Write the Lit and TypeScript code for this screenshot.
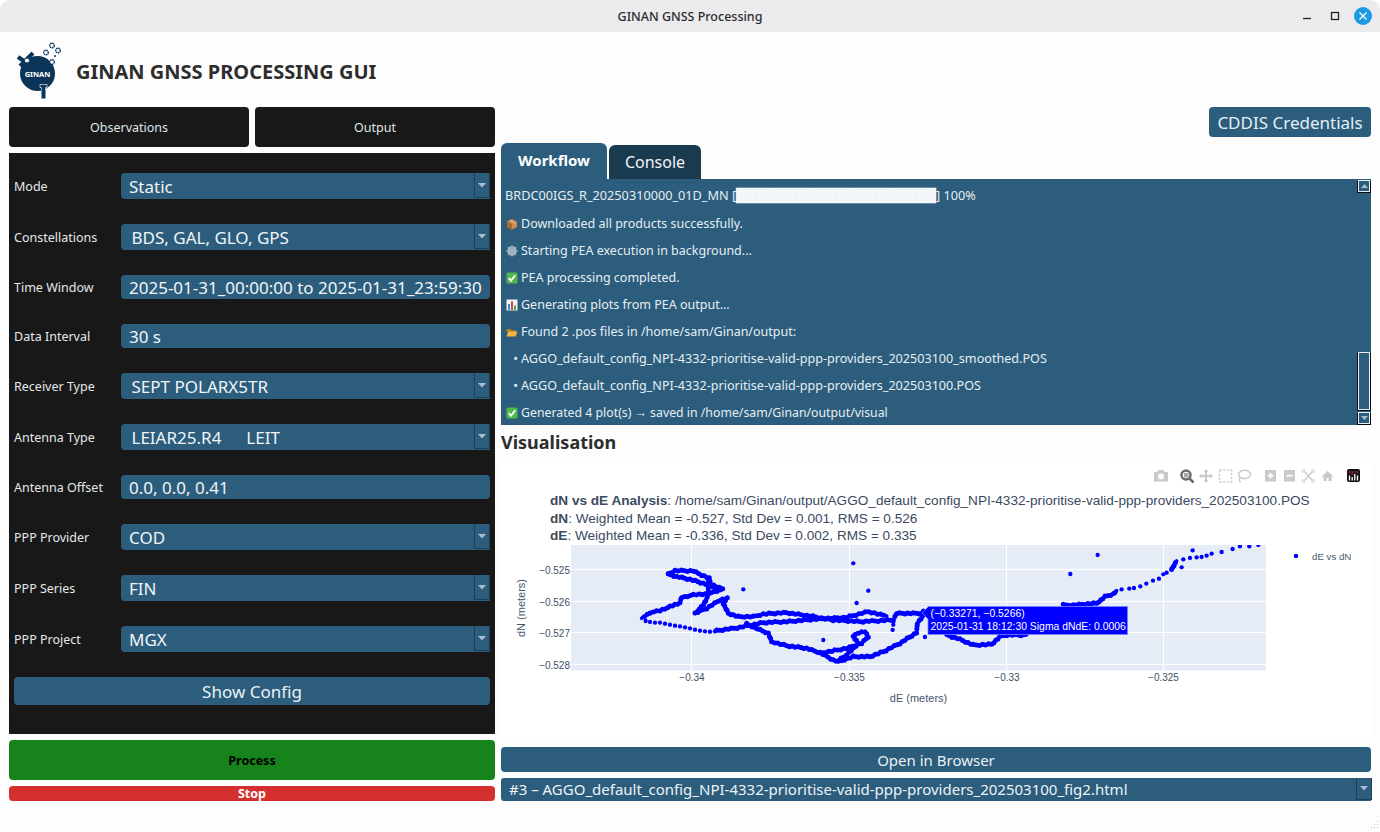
import { LitElement, html, css, svg } from "lit";
import { customElement } from "lit/decorators.js";

const FIELDS = [
  { label: "Mode", value: "Static", combo: true },
  { label: "Constellations", value: "BDS, GAL, GLO, GPS", combo: true, inset: true },
  { label: "Time Window", value: "2025-01-31_00:00:00 to 2025-01-31_23:59:30" },
  { label: "Data Interval", value: "30 s" },
  { label: "Receiver Type", value: "SEPT POLARX5TR", combo: true, inset: true },
  { label: "Antenna Type", value: "LEIAR25.R4\u00a0\u00a0\u00a0\u00a0\u00a0\u2009LEIT", combo: true, inset: true },
  { label: "Antenna Offset", value: "0.0, 0.0, 0.41" },
  { label: "PPP Provider", value: "COD", combo: true },
  { label: "PPP Series", value: "FIN", combo: true },
  { label: "PPP Project", value: "MGX", combo: true },
];

const ICONS: Record<string, unknown> = {
  box: svg`<path d="M1 3.5 6 1l5 2.5V9L6 11.5 1 9z" fill="#c98a4b"/><path d="M1 3.5 6 6v5.5L1 9z" fill="#a9692f"/><path d="M3.5 2.2 8.5 4.8v1.6" stroke="#e8c79a" fill="none"/>`,
  gear: svg`<circle cx="6" cy="6" r="3.6" fill="none" stroke="#9fb3c0" stroke-width="2.4"/><path d="M6 .5v11M.5 6h11M2.1 2.1l7.8 7.8M9.9 2.1l-7.8 7.8" stroke="#9fb3c0" stroke-width="1.5"/>`,
  check: svg`<rect x=".5" y=".5" width="11" height="11" rx="1.5" fill="#4fb84f"/><path d="M2.8 6.2 5 8.8l4.2-5.6" stroke="#fff" stroke-width="1.8" fill="none"/>`,
  chart: svg`<rect x=".5" y=".5" width="11" height="11" fill="#eef2f5"/><rect x="2" y="5" width="2" height="6" fill="#3f8fd0"/><rect x="5" y="2.5" width="2" height="8.5" fill="#d0483f"/><rect x="8" y="6.5" width="2" height="4.5" fill="#4fa84f"/>`,
  folder: svg`<path d="M.5 3h4l1 1.2H10V6H.5z" fill="#b77b22"/><path d="M.5 10.5 2.3 5.5h9.2l-1.800 5z" fill="#f2b544"/>`,
};

const LOG = [
  { icon: "box", text: "Downloaded all products successfully." },
  { icon: "gear", text: "Starting PEA execution in background..." },
  { icon: "check", text: "PEA processing completed." },
  { icon: "chart", text: "Generating plots from PEA output..." },
  { icon: "folder", text: "Found 2 .pos files in /home/sam/Ginan/output:" },
  { bullet: true, text: "AGGO_default_config_NPI-4332-prioritise-valid-ppp-providers_202503100_smoothed.POS" },
  { bullet: true, text: "AGGO_default_config_NPI-4332-prioritise-valid-ppp-providers_202503100.POS" },
  { icon: "check", text: "Generated 4 plot(s) \u2192 saved in /home/sam/Ginan/output/visual", tight: true },
];

// traced from the plot, in 3x crop coordinates
const LINES_A = [
  "505,283 525,272 545,272 580,273 605,285 628,295 632,312 668,328",
  "505,283 530,290 570,298 610,310 640,320 668,328",
  "668,328 625,340 580,345 545,352 540,368 510,380 480,392 450,398 425,415",
  "625,300 625,345 610,375 585,400 620,385 660,360 682,355 670,370 685,400 715,410 760,410 790,402 860,398 930,408 1000,420 1080,425 1180,420 1190,400 1240,400 1275,400",
  "650,452 720,442 790,428 860,425 940,418 1040,412 1105,395 1160,408",
  "740,432 780,450 805,460 815,485 860,497 920,505 960,518 1000,540 1015,545 1060,530 1110,530 1150,515 1200,490 1250,458 1252,430 1275,400",
  "960,520 1040,505 1085,490 1105,470 1095,455 1065,462 1060,470 1075,490 1040,525 1015,540",
];
const DOTS_A = [
  [1060, 250], [730, 328], [1105, 332], [1070, 369], [970, 480], [1275, 471], [1178, 450], [1180, 434], [1270, 392],
  [437, 423], [450, 426], [465, 428], [480, 428], [495, 431], [510, 434], [525, 437], [540, 439], [555, 442], [570, 445],
  [585, 449], [600, 452], [615, 454], [630, 455], [645, 454],
];
const LINES_B = [
  "140,315 180,328 220,345 275,343 300,320 320,315 380,315",
  "490,225 520,225 590,220 615,200 640,192 650,182",
  "815,120 822,105 830,93",
];
const DOTS_B = [
  [593, 75], [511, 132], [878, 61], [845, 112], [850, 88], [870, 84], [890, 82], [905, 81], [920, 77], [935, 71], [965, 66],
  [998, 57], [1020, 49], [1048, 49], [1075, 45], [602, 212], [665, 178], [688, 176], [702, 174], [721, 169], [739, 161],
  [759, 152], [777, 146], [790, 133], [800, 128],
];

// the trace is thousands of overlapping markers, so walk each line and drop dots on it
function markers(line: string) {
  const pts = line.split(" ").map((p) => p.split(",").map(Number));
  const out: number[][] = [];
  for (let i = 1; i < pts.length; i++) {
    const [x0, y0] = pts[i - 1];
    const [x1, y1] = pts[i];
    const n = Math.max(1, Math.round(Math.hypot(x1 - x0, y1 - y0) / 9));
    for (let k = 0; k < n; k++) {
      const wob = ((out.length * 7) % 5) - 2;
      out.push([x0 + ((x1 - x0) * k) / n, y0 + ((y1 - y0) * k) / n + wob]);
    }
  }
  return out;
}

function trace(lines: string[], dots: number[][]) {
  return svg`${lines.map((p) => svg`<polyline points=${p} fill="none" stroke="#0000ff" stroke-width="11" stroke-linejoin="round" stroke-linecap="round"/>
      ${markers(p).map((d) => svg`<circle cx=${d[0]} cy=${d[1]} r="7.500" fill="#0000ff"/>`)}`)}
    ${dots.map((d) => svg`<circle cx=${d[0]} cy=${d[1]} r="6.500" fill="#0000ff"/>`)}`;
}

@customElement("app-root")
export class AppRoot extends LitElement {
  static styles = css`
    :host {
      display: block;
      width: 1380px;
      height: 832px;
      overflow: hidden;
      background: #fdfdfd;
      font-family: "Noto Sans", "Open Sans", sans-serif;
    }
    .titlebar {
      height: 32px;
      background: #ebebed;
      border-radius: 10px 10px 0 0;
      display: grid;
      grid-template-columns: 1fr auto 1fr;
      align-items: center;
      font-size: 12.5px;
      font-weight: 500;
      color: #2c2c2c;
    }
    .controls {
      grid-column: 3;
      display: flex;
      justify-content: flex-end;
      align-items: center;
      padding-right: 7px;
    }
    .header {
      height: 75px;
      padding-left: 9px;
      display: flex;
      align-items: center;
      gap: 7px;
    }
    .header h1 {
      margin: 3px 0 0;
      font-size: 20px;
      font-weight: 700;
      color: #2d2d2d;
    }
    .main {
      display: grid;
      grid-template-columns: 486px 870px;
      gap: 6px;
      padding-left: 9px;
    }
    .left,
    .right {
      display: flex;
      flex-direction: column;
      gap: 6px;
    }
    .top-buttons {
      display: grid;
      grid-template-columns: 240px 240px;
      gap: 6px;
    }
    .dark-btn {
      height: 40px;
      background: #181818;
      color: #dfe6ea;
      border-radius: 4px;
      font-size: 12.5px;
      display: flex;
      align-items: center;
      justify-content: center;
    }
    .panel {
      height: 581px;
      box-sizing: border-box;
      background: #181818;
      padding: 20px 5px 0;
      display: flex;
      flex-direction: column;
      gap: 25px;
    }
    .row {
      display: grid;
      grid-template-columns: 107px 369px;
      align-items: center;
    }
    .label {
      color: #e4e8ea;
      font-size: 12.5px;
    }
    .field {
      height: 24px;
      background: #2c5d7c;
      color: #f1f5f7;
      border-radius: 4px;
      font-size: 17px;
      line-height: 25px;
      padding-left: 8px;
      white-space: nowrap;
      display: flex;
      justify-content: space-between;
    }
    .combo {
      height: 26px;
      line-height: 28px;
      border-radius: 4px 0 0 4px;
    }
    .inset {
      padding-left: 10.5px;
    }
    .arrow {
      width: 14px;
      height: 24px;
      margin-right: 1px;
      background: #2c5d7c;
      border-left: 1px solid #1d4058;
      border-bottom: 1px solid #1d4058;
      box-shadow: 1px 0 0 #1d4058;
      display: flex;
      align-items: center;
      justify-content: center;
    }
    .wide-btn {
      height: 28px;
      background: #2c5d7c;
      color: #e9f1f5;
      border-radius: 4px;
      font-size: 17px;
      display: flex;
      align-items: center;
      justify-content: center;
    }
    .process {
      height: 40px;
      background: #16841a;
      border-radius: 4px;
      color: #000;
      font-size: 12.5px;
      font-weight: 700;
      display: flex;
      align-items: center;
      justify-content: center;
    }
    .stop {
      height: 15px;
      background: #d32f2f;
      border-radius: 4px;
      color: #fff;
      font-size: 12.5px;
      font-weight: 700;
      line-height: 15px;
      text-align: center;
    }
    .cddis-row {
      display: flex;
      justify-content: flex-end;
    }
    .cddis {
      height: 30px;
      width: 162px;
      background: #2c5d7c;
      color: #e4eff5;
      border-radius: 4px;
      font-size: 17px;
      display: flex;
      align-items: center;
      justify-content: center;
    }
    .workspace {
      display: flex;
      flex-direction: column;
    }
    .tabs {
      display: flex;
      align-items: flex-end;
      gap: 2px;
    }
    .tab {
      border-radius: 6px 6px 0 0;
      display: flex;
      align-items: center;
      justify-content: center;
      color: #f2f5f7;
      font-size: 16px;
    }
    .tab.active {
      width: 106px;
      height: 36px;
      background: #2c5d7c;
      color: #fff;
      font-size: 15px;
      font-weight: 700;
      padding-bottom: 3px;
      box-sizing: border-box;
    }
    .tab.idle {
      width: 92px;
      height: 34px;
      background: #1a3a50;
    }
    .log {
      position: relative;
      height: 246px;
      background: #2c5d7c;
      color: #e6eef3;
      font-size: 12.5px;
      padding: 3px 0 0 4px;
      box-sizing: border-box;
      overflow: hidden;
    }
    .log-line {
      height: 27px;
      line-height: 27px;
      display: flex;
      align-items: center;
      white-space: nowrap;
    }
    .log-line.first {
      height: 28px;
      align-items: flex-start;
      font-size: 12.7px;
    }
    .log-line.wide {
      font-size: 12.6px;
    }
    .log-line.tight {
      font-size: 12.3px;
    }
    .log-line svg {
      width: 12px;
      height: 12px;
      margin: 0 3px 0 1px;
      flex: none;
    }
    .bullet {
      width: 16px;
      text-align: right;
      padding-right: 3px;
      box-sizing: border-box;
      flex: none;
    }
    .blocks {
      font-family: "DejaVu Sans", sans-serif;
      font-size: 13px;
      color: #f4f7fa;
    }
    .scroll-btn,
    .scroll-thumb {
      position: absolute;
      right: 1px;
      width: 10px;
      border: 1px solid #e8eef2;
      box-shadow: -1px 1px 0 #0c0c0c, 1px 1px 0 #0c0c0c;
      background: #2c5d7c;
      display: flex;
      align-items: center;
      justify-content: center;
    }
    .scroll-btn.up {
      top: 1px;
      height: 10px;
    }
    .scroll-thumb {
      top: 173px;
      height: 56px;
    }
    .scroll-btn.down {
      top: 233px;
      height: 10px;
    }
    .vis-title {
      height: 34px;
      line-height: 34px;
      margin-top: -6px;
      font-size: 18px;
      font-weight: 700;
      color: #2d2d2d;
    }
    .chart {
      height: 280px;
      background: #fff;
      margin-top: -6px;
    }
    .chart svg {
      display: block;
    }
    .open {
      height: 25px;
      margin-top: 2px;
      background: #2c5d7c;
      color: #e9f1f5;
      border-radius: 4px;
      font-size: 15px;
      display: flex;
      align-items: center;
      justify-content: center;
    }
    .plots {
      height: 23px;
      background: #2c5d7c;
      color: #eef3f6;
      font-size: 15px;
      line-height: 23px;
      padding-left: 8px;
      display: flex;
      justify-content: space-between;
      border-radius: 3px 0 0 3px;
    }
    .plots .arrow {
      height: 21px;
      margin-right: 0;
    }
    .grip {
      position: absolute;
      left: 1368px;
      top: 820px;
    }
  `;

  private arrow() {
    return html`<span class="arrow"><svg width="8" height="5"><path d="M0 0h8L4 4.5z" fill="#a9bfcd" /></svg></span>`;
  }

  private modebar() {
    const g = "#c9c9c9";
    return svg`
      <path d="M1154 472h3l1.500-2h5l1.500 2h3v9.500h-14z" fill=${g} />
      <circle cx="1161" cy="476.500" r="3" fill="#fff" />
      <rect x="1184" y="473" width="4.500" height="4.500" fill="#a8a8a8" />
      <circle cx="1186" cy="475" r="4.500" fill="none" stroke="#6b6b6b" stroke-width="2.500" />
      <path d="M1189.500 478.500l4 4" stroke="#6b6b6b" stroke-width="2.500" />
      <path d="M1206 470v12M1200 476h12" stroke=${g} stroke-width="2" />
      <path d="M1203.500 472l2.500-3 2.500 3zM1203.500 480l2.500 3 2.500-3zM1202 473.500l-3 2.500 3 2.500zM1210 473.500l3 2.500-3 2.500z" fill=${g} />
      <rect x="1219.500" y="470" width="12" height="12" fill="none" stroke=${g} stroke-width="1.500" stroke-dasharray="2 1.800" />
      <ellipse cx="1244.500" cy="474.500" rx="6" ry="4.200" fill="none" stroke=${g} stroke-width="1.500" />
      <path d="M1240 478c-1 1.500-1 3.500 1 4" fill="none" stroke=${g} stroke-width="1.300" />
      <rect x="1265" y="470" width="11" height="11.500" fill=${g} />
      <path d="M1267.500 475.700h6M1270.500 472.700v6" stroke="#fff" stroke-width="1.800" />
      <rect x="1284" y="470" width="11" height="11.500" fill=${g} />
      <path d="M1286.500 475.700h6" stroke="#fff" stroke-width="1.800" />
      <path d="M1302.500 473v-3h3M1311 470h3v3M1314 479v3h-3M1305.500 482h-3v-3" fill="none" stroke=${g} />
      <path d="M1304.500 471.500l8 9M1312.500 471.500l-8 9" stroke=${g} stroke-width="1.300" />
      <path d="M1321.500 476.500l6-5.500 6 5.500h-2v4.500h-3v-3h-2v3h-3v-4.500z" fill=${g} />
      <rect x="1347" y="469" width="13" height="13" rx="2" fill="#111" />
      <path d="M1349.500 475.500v5M1352.200 477v3.500M1354.800 474v6.500M1357.500 475.500v5" stroke="#fff" stroke-width="1.300" />
      <path d="M1349.500 471v2.500M1352.200 471v4M1354.800 471v1.500M1357.500 471v2.500" stroke="#a02c50" stroke-width="1.300" />
    `;
  }

  private chart() {
    const t = "font-family:'Liberation Sans',sans-serif";
    return html`<svg width="870" height="280" viewBox="501 459 870 280" style=${t}>
      <defs><clipPath id="plot"><rect x="571" y="545" width="695" height="125.500" /></clipPath></defs>
      ${this.modebar()}
      <g font-size="13.600" fill="#3a4a5f">
        <text x="550" y="505"><tspan font-weight="700">dN vs dE Analysis</tspan>: /home/sam/Ginan/output/AGGO_default_config_NPI-4332-prioritise-valid-ppp-providers_202503100.POS</text>
        <text x="550" y="523"><tspan font-weight="700">dN</tspan>: Weighted Mean = -0.527, Std Dev = 0.001, RMS = 0.526</text>
        <text x="550" y="540"><tspan font-weight="700">dE</tspan>: Weighted Mean = -0.336, Std Dev = 0.002, RMS = 0.335</text>
      </g>
      <rect x="571" y="545" width="695" height="125.500" fill="#e5ecf6" />
      <g stroke="#fff" stroke-width="1">
        ${[691.5, 849.5, 1006.5, 1163.5].map((x) => svg`<line x1=${x} x2=${x} y1="545" y2="670.500" />`)}
        ${[569.5, 601.5, 632.5, 664.5].map((y) => svg`<line x1="571" x2="1266" y1=${y} y2=${y} />`)}
      </g>
      <g clip-path="url(#plot)">
        <g transform="translate(500 480) scale(.3333)">${trace(LINES_A, DOTS_A)}</g>
        <g transform="translate(900 530) scale(.3333)">${trace(LINES_B, DOTS_B)}</g>
      </g>
      <g font-size="10" fill="#3f5068">
        <g text-anchor="middle">
          <text x="692" y="681">−0.34</text>
          <text x="849.500" y="681">−0.335</text>
          <text x="1007" y="681">−0.33</text>
          <text x="1163.500" y="681">−0.325</text>
        </g>
        <g text-anchor="end">
          <text x="570" y="574">−0.525</text>
          <text x="570" y="606">−0.526</text>
          <text x="570" y="637">−0.527</text>
          <text x="570" y="669">−0.528</text>
        </g>
        <text x="1312" y="560" fill="#4b5a70" font-size="9.700">dE vs dN</text>
      </g>
      <circle cx="1296" cy="556" r="2.300" fill="#0000ff" />
      <g font-size="11" fill="#46566c">
        <text x="918.500" y="702" text-anchor="middle">dE (meters)</text>
        <text transform="translate(525 608) rotate(-90)" text-anchor="middle">dN (meters)</text>
      </g>
      <path d="M928 606.500h199.500v28H928V619l-6-6 6-6z" fill="#0000ff" stroke="#8080ff" stroke-width=".8" />
      <g font-size="10.400" fill="#fff">
        <text x="930.500" y="617">(−0.33271, −0.5266)</text>
        <text x="930.500" y="630">2025-01-31 18:12:30 Sigma dNdE: 0.0006</text>
      </g>
    </svg>`;
  }

  render() {
    return html`
      <div class="titlebar">
        <span style="grid-column:2">GINAN GNSS Processing</span>
        <div class="controls">
          <svg width="70" height="20" viewBox="1303 6 70 20">
            <path d="M1303 18.500h8" stroke="#222" stroke-width="1.300" />
            <rect x="1331.500" y="12.500" width="7" height="7" fill="none" stroke="#222" stroke-width="1.300" />
            <circle cx="1363" cy="16" r="9" fill="#1d9be0" />
            <path d="M1359.500 12.500l7 7M1366.500 12.500l-7 7" stroke="#fff" stroke-width="1.200" />
          </svg>
        </div>
      </div>
      <div class="header">
        <svg width="60" height="60" viewBox="9 40 60 60">
          <circle cx="37.500" cy="73.500" r="17.500" fill="#0b3558" />
          <text x="37.500" y="76.500" text-anchor="middle" font-size="7.500" font-weight="700" fill="#fff">GINAN</text>
          <path d="M18 57l15 10M33 53 20 66" stroke="#0b3558" stroke-width="4" />
          <circle cx="27" cy="60.500" r="2.500" fill="#fff" stroke="#0b3558" />
          <path d="M40 84.500h7v3h-1.500v3h-4v-3H40z" fill="#0b3558" stroke="#fff" stroke-width=".6" />
          <path d="M41.500 90h4v8.500h-4z" fill="#0b3558" />
          <g fill="#fff" stroke="#0b3558" stroke-width="1.400" stroke-dasharray="1.500 .5">
            <circle cx="52" cy="45.500" r="2.300" />
            <circle cx="46" cy="52.500" r="2.300" />
            <circle cx="58" cy="50.500" r="2.300" />
            <circle cx="52" cy="62" r="2.300" />
          </g>
          <circle cx="55" cy="56" r="1" fill="#0b3558" />
        </svg>
        <h1>GINAN GNSS PROCESSING GUI</h1>
      </div>
      <div class="main">
        <div class="left">
          <div class="top-buttons">
            <div class="dark-btn">Observations</div>
            <div class="dark-btn">Output</div>
          </div>
          <div class="panel">
            ${FIELDS.map(
              (f) => html`<div class="row">
                <span class="label">${f.label}</span>
                <div class="field ${f.combo ? "combo" : ""} ${f.inset ? "inset" : ""}">
                  <span>${f.value}</span>${f.combo ? this.arrow() : ""}
                </div>
              </div>`
            )}
            <div class="wide-btn">Show Config</div>
          </div>
          <div class="process">Process</div>
          <div class="stop">Stop</div>
        </div>
        <div class="right">
          <div class="cddis-row"><div class="cddis">CDDIS Credentials</div></div>
          <div class="workspace">
            <div class="tabs">
              <div class="tab active">Workflow</div>
              <div class="tab idle">Console</div>
            </div>
            <div class="log">
              <div class="log-line first">BRDC00IGS_R_20250310000_01D_MN [<span class="blocks">${"█".repeat(20)}</span>] 100%</div>
              ${LOG.map(
                (l) => html`<div class="log-line ${l.bullet ? "wide" : ""} ${l.tight ? "tight" : ""}">
                  ${l.bullet
                    ? html`<span class="bullet">•</span>`
                    : html`<svg viewBox="0 0 12 12">${ICONS[l.icon as string]}</svg>`}${l.text}
                </div>`
              )}
              <div class="scroll-btn up"><svg width="7" height="4"><path d="M0 4h7L3.500 0z" fill="#a9bfcd" /></svg></div>
              <div class="scroll-thumb"></div>
              <div class="scroll-btn down"><svg width="7" height="4"><path d="M0 0h7L3.500 4z" fill="#a9bfcd" /></svg></div>
            </div>
          </div>
          <div class="vis-title">Visualisation</div>
          <div class="chart">${this.chart()}</div>
          <div class="open">Open in Browser</div>
          <div class="plots">
            <span>#3 – AGGO_default_config_NPI-4332-prioritise-valid-ppp-providers_202503100_fig2.html</span>${this.arrow()}
          </div>
        </div>
      </div>
      <svg class="grip" width="12" height="12">
        <g fill="#c4c4c4">
          <rect x="9" y="1" width="1" height="1" /><rect x="6" y="4" width="1" height="1" /><rect x="9" y="4" width="1" height="1" />
          <rect x="3" y="7" width="1" height="1" /><rect x="6" y="7" width="1" height="1" /><rect x="9" y="7" width="1" height="1" />
        </g>
      </svg>
    `;
  }
}
